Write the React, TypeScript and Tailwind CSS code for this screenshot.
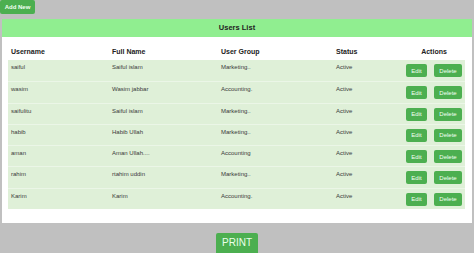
import React from "react";

type User = { username: string; fullName: string; group: string; status: string };

const users: User[] = [
  { username: "saiful", fullName: "Saiful islam", group: "Marketing..", status: "Active" },
  { username: "wasim", fullName: "Wasim jabbar", group: "Accounting.", status: "Active" },
  { username: "saifulitu", fullName: "Saiful islam", group: "Marketing..", status: "Active" },
  { username: "habib", fullName: "Habib Ullah", group: "Marketing..", status: "Active" },
  { username: "aman", fullName: "Aman Ullah....", group: "Accounting", status: "Active" },
  { username: "rahim", fullName: "rtahim uddin", group: "Marketing..", status: "Active" },
  { username: "Karim", fullName: "Karim", group: "Accounting.", status: "Active" },
];

export default function App() {
  return (
    <div
      className="h-[253px] w-[474px] overflow-hidden bg-[#c0c0c0]"
      style={{ fontFamily: '"Liberation Sans", Arial, sans-serif' }}
    >
      <button className="block h-[14px] w-[35px] rounded-[2px] bg-[#4caf50] text-[6px] font-bold leading-none text-[#f2fff2]">
        Add New
      </button>

      <div className="mt-[5px] ml-[2px] w-[470px] bg-white pb-[14px]">
        <div className="flex h-[18px] items-center justify-center bg-[#90ee90] text-[7.5px] font-bold text-[#222]">
          Users List
        </div>

        <div className="px-[6px] pt-[7px]">
          <div className="flex h-[16px] items-center text-[7px] font-bold text-[#222]">
            <div className="w-[101px] pl-[3px]">Username</div>
            <div className="w-[109px] pl-[3px]">Full Name</div>
            <div className="w-[115px] pl-[3px]">User Group</div>
            <div className="w-[70px] pl-[3px]">Status</div>
            <div className="w-[62px] text-center">Actions</div>
          </div>

          {users.map((u, i) => (
            <div
              key={i}
              className={`flex h-[21.3px] w-[457px] bg-[#dff0d8] text-[6px] leading-none text-[#3a3a3a] ${
                i > 0 ? "border-t border-[#ebf6e7]" : ""
              }`}
            >
              <div className="w-[101px] pl-[3px] pt-[4px]">{u.username}</div>
              <div className="w-[109px] pl-[3px] pt-[4px]">{u.fullName}</div>
              <div className="w-[115px] pl-[3px] pt-[4px]">{u.group}</div>
              <div className="w-[70px] pl-[3px] pt-[4px]">{u.status}</div>
              <div className="flex w-[62px] justify-center gap-[7px] pt-[4px]">
                <button className="h-[13px] w-[21px] rounded-[2px] bg-[#4caf50] text-[6px] leading-none text-[#f2fff2]">
                  Edit
                </button>
                <button className="h-[13px] w-[28px] rounded-[2px] bg-[#4caf50] text-[6px] leading-none text-[#f2fff2]">
                  Delete
                </button>
              </div>
            </div>
          ))}
        </div>
      </div>

      <div className="mt-[10px] flex justify-center">
        <button className="h-[24px] w-[42px] rounded-[2px] bg-[#4caf50] pb-[4px] text-[10px] leading-[10px] text-[#eaffea]">
          PRINT
        </button>
      </div>
    </div>
  );
}
